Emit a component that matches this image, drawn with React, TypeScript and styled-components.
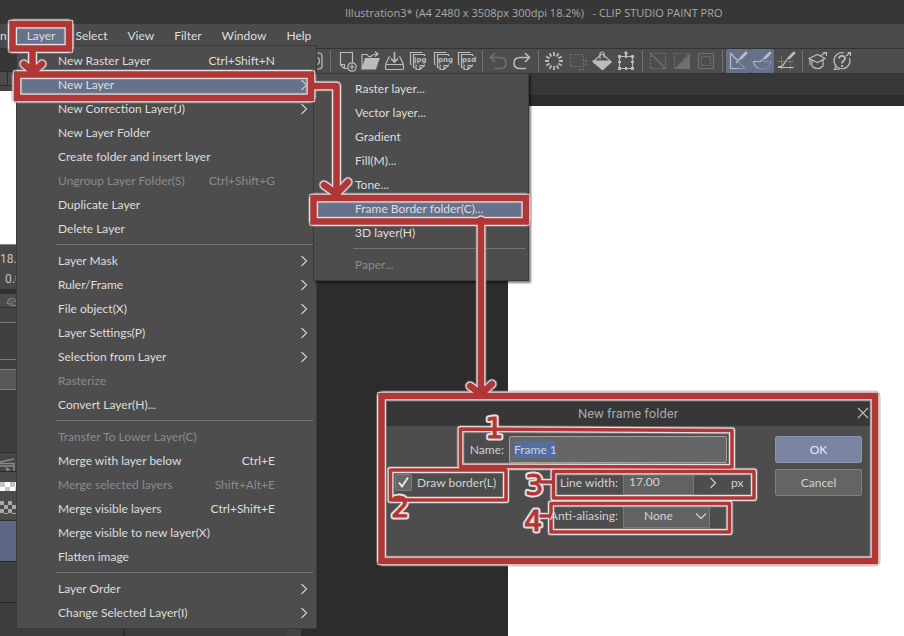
import React from "react";
import styled, { createGlobalStyle, css } from "styled-components";

const GlobalStyle = createGlobalStyle`
  * { box-sizing: border-box; }
  body { margin: 0; background: #2b2b2b; }
  button, input, select { font: inherit; color: inherit; margin: 0; }
`;

const uiFont = css`
  font-family: Lato, "Open Sans", sans-serif;
  font-size: 12px;
  line-height: 16px;
`;

/* ---------- application frame ---------- */

const Page = styled.div`
  ${uiFont}
  position: relative;
  display: flex;
  flex-direction: column;
  min-height: 100vh;
  overflow: hidden;
  color: #dedede;
  background: #2b2b2b;
`;
const TitleBar = styled.header`
  height: 24px;
  padding: 5px 0 0 345px;
  background: #373737;
  color: #a9a9a9;
  font-family: "Open Sans", sans-serif;
  font-size: 11px;
  white-space: pre;
`;
const MenuBar = styled.nav`
  display: flex;
  align-items: center;
  height: 24px;
  background: #4b4b4b;
`;
const MenuBarItem = styled.button<{ $open?: boolean; $cut?: boolean }>`
  height: 18px;
  padding: ${(p) => (p.$cut ? "0 10px 0 0" : "0 10px")};
  border: 0;
  background: ${(p) => (p.$open ? "#66718c" : "transparent")};
  line-height: 18px;
`;
const Body = styled.div`
  display: flex;
  flex: 1;
`;

/* ---------- left dock ---------- */

const Dock = styled.aside`
  display: flex;
  flex-direction: column;
  width: 301px;
  background: #3d3d3d;
`;
const DockBlock = styled.div<{ $h: number; $bg: string; $line?: string }>`
  flex: none;
  height: ${(p) => p.$h}px;
  background: ${(p) => p.$bg};
  border-bottom: ${(p) => (p.$line ? `1px solid ${p.$line}` : "0")};
  overflow: hidden;
`;
const DockTab = styled.div`
  width: 8px;
  height: 100%;
  border-right: 1px solid #2d2d2d;
`;
const Readouts = styled.div`
  padding-top: 4px;
  font-family: Roboto, sans-serif;
  line-height: 20px;
  color: #c4c4c4;
`;
const Readout = styled.div<{ $indent?: boolean }>`
  padding-left: ${(p) => (p.$indent ? 5 : 0)}px;
`;
const Checker = styled.div<{ $cell: number; $a: string; $b: string }>`
  width: 16px;
  height: 100%;
  background: repeating-conic-gradient(${(p) => p.$a} 0 25%, ${(p) => p.$b} 0 50%) 0 0 /
    ${(p) => p.$cell * 2}px ${(p) => p.$cell * 2}px;
`;
const DockFooter = styled.div`
  flex: 1;
  display: flex;
  align-items: flex-end;
  justify-content: flex-end;
`;
const DockGrip = styled.div`
  width: 178px;
  height: 8px;
  border-left: 2px solid #2d2d2d;
  border-right: 14px solid #444;
`;

/* ---------- toolbar and canvas ---------- */

const Main = styled.main`
  display: flex;
  flex: 1;
  flex-direction: column;
  min-width: 0;
`;
const Toolbar = styled.div`
  display: flex;
  height: 26px;
  padding-left: 1px;
  border-top: 1px solid #343434;
  border-bottom: 1px solid #343434;
  background: #4d4d4d;
`;
const ToolButton = styled.button<{ $on?: boolean; $off?: boolean }>`
  flex: none;
  width: 24px;
  height: 24px;
  padding: 0;
  border: 0;
  border-radius: 2px;
  background: ${(p) => (p.$on ? "#66718c" : "transparent")};
  color: ${(p) => (p.$off ? "#707070" : "#bcbcbc")};
  svg { display: block; }
`;
const ToolDivider = styled.div`
  flex: none;
  width: 1px;
  margin: 1px 3px 1px 4px;
  background: #747474;
`;
const TabStrip = styled.div`
  height: 21px;
  background: #383838;
`;
const RulerStrip = styled.div`
  height: 11px;
  background: #2c2c2c;
`;
const CanvasRow = styled.div`
  display: flex;
  flex: 1;
`;
const Pasteboard = styled.div`
  width: 207px;
  background: #2c2c2c;
`;
const Paper = styled.div`
  flex: 1;
  background: #fff;
`;

/* ---------- menus ---------- */

const Menu = styled.div<{ $sub?: boolean }>`
  position: absolute;
  left: ${(p) => (p.$sub ? 313 : 16)}px;
  top: ${(p) => (p.$sub ? 73 : 45)}px;
  width: ${(p) => (p.$sub ? 216 : 301)}px;
  padding: 3px 0;
  border: 1px solid #3a3a3a;
  background: #4d4d4d;
  box-shadow: ${(p) => (p.$sub ? "2px 2px 2px rgba(0, 0, 0, 0.5)" : "none")};
`;
const MenuItem = styled.button<{ $active?: boolean }>`
  display: grid;
  grid-template-columns: 1fr auto;
  align-items: center;
  width: 100%;
  height: 24px;
  padding: 0 8px 0 41px;
  border: 0;
  background: ${(p) =>
    p.$active ? "linear-gradient(#66718c, #66718c) 4px 4px / calc(100% - 8px) 17px no-repeat" : "transparent"};
  text-align: left;
  &:disabled { color: #8b8b8b; }
`;
const Shortcut = styled.span`
  padding-right: 33px;
`;
const MenuRule = styled.hr`
  height: 1px;
  margin: 3px 3px 4px 39px;
  border: 0;
  background: #737373;
`;

type Entry = { text: string; keys?: string; more?: boolean; off?: boolean; active?: boolean } | null;

const layerMenu: Entry[] = [
  { text: "New Raster Layer", keys: "Ctrl+Shift+N" },
  { text: "New Layer", more: true, active: true },
  { text: "New Correction Layer(J)", more: true },
  { text: "New Layer Folder" },
  { text: "Create folder and insert layer" },
  { text: "Ungroup Layer Folder(S)", keys: "Ctrl+Shift+G", off: true },
  { text: "Duplicate Layer" },
  { text: "Delete Layer" },
  null,
  { text: "Layer Mask", more: true },
  { text: "Ruler/Frame", more: true },
  { text: "File object(X)", more: true },
  { text: "Layer Settings(P)", more: true },
  { text: "Selection from Layer", more: true },
  { text: "Rasterize", off: true },
  { text: "Convert Layer(H)..." },
  null,
  { text: "Transfer To Lower Layer(C)", off: true },
  { text: "Merge with layer below", keys: "Ctrl+E" },
  { text: "Merge selected layers", keys: "Shift+Alt+E", off: true },
  { text: "Merge visible layers", keys: "Ctrl+Shift+E" },
  { text: "Merge visible to new layer(X)" },
  { text: "Flatten image" },
  null,
  { text: "Layer Order", more: true },
  { text: "Change Selected Layer(I)", more: true },
];
const newLayerMenu: Entry[] = [
  { text: "Raster layer..." },
  { text: "Vector layer..." },
  { text: "Gradient" },
  { text: "Fill(M)..." },
  { text: "Tone..." },
  { text: "Frame Border folder(C)...", active: true },
  { text: "3D layer(H)" },
  null,
  { text: "Paper...", off: true },
];

const Chevron = () => (
  <svg width="8" height="12" viewBox="0 0 8 12" fill="none" stroke="#c8c8c8" strokeWidth="1.3">
    <path d="M1.5 1 6.5 6l-5 5" />
  </svg>
);
const Entries = ({ items }: { items: Entry[] }) => (
  <>
    {items.map((e, i) =>
      e === null ? (
        <MenuRule key={i} />
      ) : (
        <MenuItem key={i} role="menuitem" disabled={e.off} $active={e.active}>
          <span>{e.text}</span>
          {e.keys && <Shortcut>{e.keys}</Shortcut>}
          {e.more && <Chevron />}
        </MenuItem>
      )
    )}
  </>
);

/* ---------- dialog ---------- */

const Dialog = styled.section`
  position: absolute;
  left: 386px;
  top: 400px;
  width: 486px;
  height: 158px;
  background: #4d4d4d;
  color: #d2d2d2;
`;
const DialogTitle = styled.div`
  display: flex;
  align-items: center;
  height: 26px;
  padding-right: 2px;
  background: #373737;
  color: #a9a9a9;
`;
const DialogHeading = styled.h2`
  flex: 1;
  margin: 0;
  padding: 1px 0 0 14px;
  font: 13px/17px Roboto, sans-serif;
  text-align: center;
`;
const CloseButton = styled.button`
  width: 14px;
  height: 14px;
  padding: 0;
  border: 0;
  background: none;
  color: #bdbdbd;
  svg { display: block; }
`;
const DialogBody = styled.form`
  display: flex;
  justify-content: space-between;
  padding: 10px 10px 0 9px;
`;
const Stack = styled.div`
  display: flex;
  flex-direction: column;
  gap: 6px;
`;
const FormRow = styled.div`
  display: flex;
  align-items: center;
  height: 27px;
`;
/* labels stay readable above the callout outlines */
const FieldLabel = styled.label<{ $w: number }>`
  position: relative;
  z-index: 1;
  width: ${(p) => p.$w}px;
  padding-right: 5px;
  text-align: right;
  white-space: nowrap;
`;
const NameBox = styled.div`
  display: flex;
  align-items: center;
  width: 218px;
  height: 27px;
  padding-left: 4px;
  border: 1px solid #a2a2a2;
  border-radius: 2px;
  background: #666;
`;
const NameInput = styled.input`
  width: 42px;
  height: 17px;
  padding: 0;
  border: 0;
  background: #506fa5;
`;
const CheckLabel = styled.label`
  display: flex;
  align-items: center;
  gap: 5px;
  width: 114px;
  white-space: nowrap;
`;
const CheckBox = styled.input`
  appearance: none;
  width: 17px;
  height: 17px;
  border: 1px solid #7c7c7c;
  border-radius: 2px;
  background: #666 url("data:image/svg+xml,%3Csvg xmlns='http://www.w3.org/2000/svg' viewBox='0 0 15 15'%3E%3Cpath d='M3 7.5l3 4 6-9' fill='none' stroke='%23eee' stroke-width='1.8'/%3E%3C/svg%3E");
`;
const NumberInput = styled.input`
  width: 71px;
  height: 24px;
  padding: 0 0 2px 5px;
  border: 1px solid #777;
  background: #626262;
`;
const StepButton = styled.button`
  display: flex;
  align-items: center;
  justify-content: center;
  width: 37px;
  height: 20px;
  padding: 0;
  border: 0;
  background: none;
`;
const SelectBox = styled.div`
  display: grid;
  align-items: center;
  width: 87px;
  svg {
    grid-area: 1 / 1;
    justify-self: end;
    margin-right: 3px;
    pointer-events: none;
  }
`;
const Select = styled.select`
  grid-area: 1 / 1;
  appearance: none;
  height: 25px;
  padding: 0 0 0 20px;
  border: 1px solid #777;
  background: #626262;
`;
const DialogButton = styled.button<{ $primary?: boolean }>`
  width: 87px;
  height: 27px;
  padding: 0;
  border: 1px solid ${(p) => (p.$primary ? "#8c95af" : "#808080")};
  border-radius: 2px;
  background: ${(p) => (p.$primary ? "#7984a2" : "#646464")};
  color: ${(p) => (p.$primary ? "#e6eaf2" : "#d2d2d2")};
`;

/* ---------- markup drawn over the interface ---------- */

const Markup = styled.svg`
  position: absolute;
  left: 0;
  top: 0;
  pointer-events: none;
`;
const Digits = styled.g`
  font-family: "DejaVu Sans", sans-serif;
  font-size: 29px;
`;
const frames =
  "M12.5 24H69V48.5H12.5ZM17 74.5H311V98H17ZM313.5 198H526V221.5H313.5ZM381.5 396H875V561H381.5Z";
const arrows =
  "M32.5 50V72M24 64L33 72 42 64M314 86H336.5V192M324 185L336.5 194 348 182M481 220V393M470 386L481 394 492 384";
const thin =
  "M460.5 429L732 430.5V467L460.5 466.5ZM390.5 470H506V500H390.5ZM553.5 471.5H754V498H553.5ZM551 503.5H729.5V532H551ZM541 482H553M541 516H551";
const Numbers = () => (
  <>
    <text x="485" y="438">1</text>
    <text x="391" y="517">2</text>
    <text x="525" y="495">3</text>
    <text x="524" y="531">4</text>
  </>
);
const Callouts = () => (
  <Markup width="904" height="636" viewBox="0 0 904 636" fill="none" strokeLinejoin="round" strokeLinecap="round" aria-hidden="true">
    <g stroke="#8f8f8f" strokeOpacity="0.55">
      <path d={frames + arrows} strokeWidth="11" />
      <path d={thin} strokeWidth="8" />
    </g>
    <g stroke="#e6e0e0">
      <path d={arrows} strokeWidth="9" />
      <path d={frames} strokeWidth="9" strokeLinejoin="bevel" />
      <path d={frames} strokeWidth="8" strokeLinejoin="miter" />
      <path d={thin} strokeWidth="6" />
      <Digits strokeWidth="5"><Numbers /></Digits>
    </g>
    <g stroke="#b13636">
      <path d={arrows} strokeWidth="6.5" />
      <path d={frames} strokeWidth="6.5" strokeLinejoin="miter" />
      <path d={thin} strokeWidth="3.5" />
      <Digits strokeWidth="1" fill="#b13636"><Numbers /></Digits>
    </g>
  </Markup>
);

/* ---------- toolbar icons ---------- */

const Icon = ({ children }: { children: React.ReactNode }) => (
  <svg width="24" height="24" viewBox="0 0 24 24" fill="none" stroke="currentColor" strokeWidth="1.2">
    {children}
  </svg>
);
const FileType = ({ label }: { label: string }) => (
  <Icon>
    <path d="M5.5 15.5H4.5V3.5H16.5M7.5 17.5V5.5H18.5V7M7.5 14V18.5H9M10 15.5V20.5H14L18.5 16.5V15.5M14 20.5V16.5H18.5" />
    <text x="8" y="13" fill="currentColor" stroke="none" fontFamily="DejaVu Sans" fontWeight="700" fontSize="7">
      {label}
    </text>
  </Icon>
);
const rays = Array.from({ length: 12 }, (_, i) => {
  const a = (i * Math.PI) / 6;
  const c = Math.cos(a);
  const s = Math.sin(a);
  return `M${(12 + 5 * c).toFixed(2)} ${(12 + 5 * s).toFixed(2)}L${(12 + 9 * c).toFixed(2)} ${(12 + 9 * s).toFixed(2)}`;
}).join("");

type Tool = { name: string; icon: React.ReactNode; on?: boolean; off?: boolean } | null;
const tools: Tool[] = [
  { name: "Clip Studio", icon: <><rect x="4" y="4" width="16" height="16" rx="3" /><circle cx="14" cy="12" r="3.5" /></> },
  null,
  { name: "New", icon: <><path d="M10.5 19.5L6.5 16V3.5H18.5V14M6.5 15.5H10.5V19.5H14" /><circle cx="18" cy="18" r="4.2" fill="#4d4d4d" /><path d="M18 15.5V20.5M15.5 18H20.5" /></> },
  { name: "Open", icon: <><path d="M4 19V5.5H9L10.5 7.5H13M13 8.5C13 6 15 5 20 5M17 2.5L20 5 17 7.5" /><path d="M7.5 9.5H21L17.5 20H4Z" fill="currentColor" /></> },
  { name: "Save", icon: <><path strokeWidth="1.6" d="M12.5 3V12.5M9 9.5L12.5 13 16 9.5" /><path d="M8.5 8H7L3.5 15.5M16.5 8H18L21.5 15.5" /><rect x="3.5" y="15.5" width="18" height="5" rx="1" /></> },
  { name: "Export JPG", icon: "jpg" },
  { name: "Export PNG", icon: "png" },
  { name: "Export PSD", icon: "psd" },
  null,
  { name: "Undo", off: true, icon: <path strokeWidth="1.6" d="M9 4L4.5 8.5 9 13M5 8.5H14C18 8.5 20 11 20 14S18 19.5 14 19.5H8" /> },
  { name: "Redo", icon: <path strokeWidth="1.6" d="M15 4L19.5 8.5 15 13M19 8.5H10C6 8.5 4 11 4 14S6 19.5 10 19.5H16" /> },
  null,
  { name: "Clear", icon: <path strokeWidth="1.8" d={rays} /> },
  { name: "Clear outside", off: true, icon: <><path strokeDasharray="2 1.5" d="M4.5 5.5H17.5V17.5H4.5Z" /><path strokeDasharray="1.5 2" d="M20 11V18M18 20.5H11" strokeWidth="2" /></> },
  { name: "Fill", icon: <><path d="M3.5 12.5L11 5.5 13.5 5.5 21 13 12.5 20.5Z" /><path d="M3 12H20L21 13 12.5 20.5 7 16C5 14 3 14 3 12Z" fill="currentColor" /><path d="M10 10V5A2 2 0 0 1 14 5V9" /></> },
  { name: "Scale and rotate", icon: <><path d="M5.5 7.5H18.5V19.5H5.5ZM12 7V4" /><g fill="currentColor" stroke="none"><path d="M4 6h3v3H4zM17 6h3v3h-3zM4 18h3v3H4zM17 18h3v3h-3zM11 6h2v3h-2zM11 18h2v3h-2zM4 12h3v2H4zM17 12h3v2h-3z" /><circle cx="12" cy="4" r="1.7" /></g></> },
  null,
  { name: "Deselect", off: true, icon: <><path strokeDasharray="2 1.5" d="M4.5 4.5H19.5V19.5H4.5Z" /><path d="M4 4L20 20" /></> },
  { name: "Invert selection", off: true, icon: <><path strokeDasharray="2 1.5" d="M4.5 19.5V4.5H19.5Z" /><path d="M5 20L20 5V20Z" fill="currentColor" stroke="none" /></> },
  { name: "Selection border", off: true, icon: <><rect x="4.5" y="4.5" width="15" height="15" rx="1" /><path strokeDasharray="2 1" d="M7.5 7.5H16.5V16.5H7.5Z" /></> },
  null,
  { name: "Snap to ruler", on: true, icon: <><path d="M4.5 3.5V19.5H11M4.5 4L12 12" /><path strokeDasharray="1.5 1" d="M11 19.5H19L13 13" strokeWidth="1" /><path d="M20 4L15 9" strokeWidth="2.8" strokeLinecap="round" /><path d="M14.5 9L10 14" /></> },
  { name: "Snap to special ruler", on: true, icon: <><path d="M3 12.5H10.5L14.5 9M3.5 12.5C4 16 6 18 8 19" /><path strokeDasharray="1.5 1" d="M8 19C14 22 20 19 21 12.5H14" strokeWidth="1" strokeOpacity="0.7" /><path d="M20 4L15 9" strokeWidth="2.8" strokeLinecap="round" /></> },
  { name: "Snap to grid", icon: <><path d="M4 18.5H20M8.5 17L14 9" /><path d="M3 12.5H20M7.5 7V21M16.5 12V21" strokeWidth="1" strokeOpacity="0.35" /><path d="M4 17.5H8L10.5 14" /><path d="M20 4L15 9" strokeWidth="2.8" strokeLinecap="round" /></> },
  null,
  { name: "Learn", icon: <><path d="M3 9.5L11.5 5.5 19 9.5 11.5 13.5ZM6 11V17C9 20.5 14 20.5 17 17V11M4 10V16M14 7L20 3.5M17 3.5H20.5V7" /></> },
  { name: "Help", icon: <><path d="M14 4A8 8 0 1 0 19.5 9M6 17L4.5 20.5 10 20M16 7L20.5 3.5M17.5 3.5H20.5V7" /><path d="M9 9.5C9 6 15 6 15 9.5 15 12 12 11.5 12 14.5M12 16V18" strokeWidth="1.8" /></> },
];

export default function App() {
  return (
    <Page>
      <GlobalStyle />
      <TitleBar>Illustration3* (A4 2480 x 3508px 300dpi 18.2%)   - CLIP STUDIO PAINT PRO</TitleBar>
      <MenuBar>
        <MenuBarItem $cut>n</MenuBarItem>
        <MenuBarItem $open>Layer</MenuBarItem>
        <MenuBarItem>Select</MenuBarItem>
        <MenuBarItem>View</MenuBarItem>
        <MenuBarItem>Filter</MenuBarItem>
        <MenuBarItem>Window</MenuBarItem>
        <MenuBarItem>Help</MenuBarItem>
      </MenuBar>
      <Body>
        <Dock>
          <DockBlock $h={24} $bg="#373737" $line="#2d2d2d" />
          <DockBlock $h={14} $bg="#4b4b4b" $line="#2d2d2d"><DockTab /></DockBlock>
          <DockBlock $h={5} $bg="#444444" />
          <DockBlock $h={154} $bg="#ffffff" $line="#8b8b8b" />
          <DockBlock $h={44} $bg="#484848">
            <Readouts>
              <Readout>18.2</Readout>
              <Readout $indent>0.0</Readout>
            </Readouts>
          </DockBlock>
          <DockBlock $h={5} $bg="#303030" />
          <DockBlock $h={14} $bg="#4b4b4b" $line="#303030">
            <svg width="18" height="14" viewBox="0 0 18 14" fill="none" stroke="#858585">
              <path d="M7 9L9 5 12 4 17 7M7 9L12 12 17 11M7 9H11L15 12M9 5C11 8 14 8 17 7" />
            </svg>
          </DockBlock>
          <DockBlock $h={15} $bg="#444444" $line="#7b7b7b" />
          <DockBlock $h={37} $bg="#404040" $line="#7b7b7b" />
          <DockBlock $h={10} $bg="#404040" $line="#7b7b7b" />
          <DockBlock $h={20} $bg="#575757" $line="#7b7b7b" />
          <DockBlock $h={63} $bg="#3d3d3d" $line="#2d2d2d" />
          <DockBlock $h={19} $bg="#464646" $line="#2d2d2d">
            <svg width="16" height="18" viewBox="0 0 16 18" fill="none" stroke="#898989" strokeWidth="1.5">
              <path d="M0 9L14 6M0 10.5H14V18M0 13H14" />
              <path d="M6 14L11 17 6 18Z" fill="#898989" stroke="none" />
            </svg>
          </DockBlock>
          <DockBlock $h={10} $bg="#4b4b4b" />
          <DockBlock $h={9} $bg="#4b4b4b"><Checker $cell={5} $a="#ffffff" $b="#c4c4c4" /></DockBlock>
          <DockBlock $h={10} $bg="#4b4b4b" />
          <DockBlock $h={13} $bg="#4b4b4b"><Checker $cell={4} $a="#4b4b4b" $b="#a9a9a9" /></DockBlock>
          <DockBlock $h={7} $bg="#4b4b4b" $line="#303030" />
          <DockBlock $h={41} $bg="#5c6784" $line="#242424" />
          <DockBlock $h={41} $bg="#3f3f3f" $line="#242424" />
          <DockFooter><DockGrip /></DockFooter>
        </Dock>
        <Main>
          <Toolbar role="toolbar">
            {tools.map((t, i) =>
              t === null ? (
                <ToolDivider key={i} />
              ) : (
                <ToolButton key={i} aria-label={t.name} $on={t.on} $off={t.off}>
                  {typeof t.icon === "string" ? <FileType label={t.icon} /> : <Icon>{t.icon}</Icon>}
                </ToolButton>
              )
            )}
          </Toolbar>
          <TabStrip />
          <RulerStrip />
          <CanvasRow>
            <Pasteboard />
            <Paper />
          </CanvasRow>
        </Main>
      </Body>

      <Menu role="menu" aria-label="Layer"><Entries items={layerMenu} /></Menu>
      <Menu role="menu" aria-label="New Layer" $sub><Entries items={newLayerMenu} /></Menu>

      <Dialog role="dialog" aria-labelledby="dialog-title">
        <DialogTitle>
          <DialogHeading id="dialog-title">New frame folder</DialogHeading>
          <CloseButton aria-label="Close">
            <svg width="14" height="14" viewBox="0 0 14 14" stroke="currentColor" strokeWidth="1.2">
              <path d="M2 2L12 12M12 2L2 12" />
            </svg>
          </CloseButton>
        </DialogTitle>
        <DialogBody onSubmit={(e) => e.preventDefault()}>
          <Stack>
            <FormRow>
              <FieldLabel $w={114} htmlFor="name">Name:</FieldLabel>
              <NameBox><NameInput id="name" defaultValue="Frame 1" /></NameBox>
            </FormRow>
            <FormRow>
              <CheckLabel><CheckBox type="checkbox" defaultChecked />Draw border(L)</CheckLabel>
              <FieldLabel $w={114} htmlFor="line-width">Line width:</FieldLabel>
              <NumberInput id="line-width" defaultValue="17.00" />
              <StepButton type="button" aria-label="Adjust line width"><Chevron /></StepButton>
              <span>px</span>
            </FormRow>
            <FormRow>
              <FieldLabel $w={228} htmlFor="aa">Anti-aliasing:</FieldLabel>
              <SelectBox>
                <Select id="aa" defaultValue="None"><option>None</option></Select>
                <svg width="12" height="8" viewBox="0 0 12 8" fill="none" stroke="#c8c8c8" strokeWidth="1.3">
                  <path d="M1 1.5L6 6.5 11 1.5" />
                </svg>
              </SelectBox>
            </FormRow>
          </Stack>
          <Stack>
            <DialogButton $primary type="submit">OK</DialogButton>
            <DialogButton type="button">Cancel</DialogButton>
          </Stack>
        </DialogBody>
      </Dialog>
      <Callouts />
    </Page>
  );
}
